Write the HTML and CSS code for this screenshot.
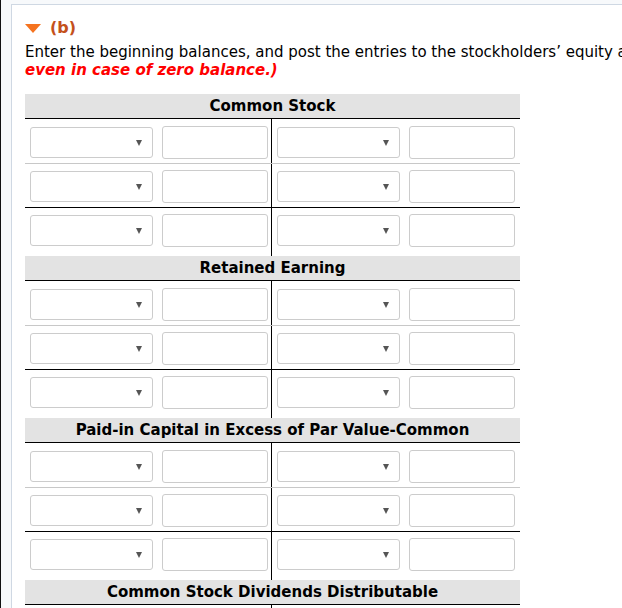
FILE: index.html
```html
<!DOCTYPE html>
<html lang="en">
<head>
    <meta charset="UTF-8">
    <title>Stockholders' Equity T-Accounts</title>
    <link rel="stylesheet" href="styles.css">
</head>
<body>
    <div class="frame">
        <div class="part-title">
            <span class="toggle"></span>
            <span>(b)</span>
        </div>

        <p class="instructions">
            Enter the beginning balances, and post the entries to the stockholders’ equity accounts. <span class="note">(Enter beginning balances<br>even in case of zero balance.)</span>
        </p>

        <div class="accounts" id="accounts"></div>
    </div>

    <template id="row-template">
        <div class="row">
            <div class="side">
                <span class="select-wrap"><select><option></option></select></span>
                <input type="text">
            </div>
            <div class="side">
                <span class="select-wrap"><select><option></option></select></span>
                <input type="text">
            </div>
        </div>
    </template>

    <script>
        const accounts = [
            "Common Stock",
            "Retained Earning",
            "Paid-in Capital in Excess of Par Value-Common",
            "Common Stock Dividends Distributable"
        ];

        const holder = document.getElementById('accounts');
        const rowTemplate = document.getElementById('row-template');

        accounts.forEach(name => {
            const block = document.createElement('div');
            block.className = 't-account';

            const head = document.createElement('div');
            head.className = 't-head';
            head.textContent = name;
            block.appendChild(head);

            const body = document.createElement('div');
            body.className = 't-body';
            for (let i = 0; i < 3; i++) {
                body.appendChild(rowTemplate.content.cloneNode(true));
            }
            block.appendChild(body);

            holder.appendChild(block);
        });
    </script>
</body>
</html>
```

FILE: styles.css
```css
html, body {
    overflow: hidden;
}

body {
    margin: 0;
    background: #f7f9fb;
    border-left: 1px solid #111;
    font-family: 'DejaVu Sans', Verdana, sans-serif;
    color: #000;
}

.frame {
    margin: 4px 0 0 10px;
    width: 1000px;
    min-height: 700px;
    background: #fff;
    border-top: 1px solid #cfd8e3;
    border-left: 1px solid #cfd8e3;
    padding: 10px 0 0 13px;
}

.part-title {
    display: flex;
    align-items: center;
    gap: 9px;
    height: 24px;
    font-size: 16px;
    font-weight: bold;
    color: #c4511c;
}

.toggle {
    width: 0;
    height: 0;
    border-left: 8px solid transparent;
    border-right: 8px solid transparent;
    border-top: 9px solid #f5731f;
    margin-top: 3px;
}

.instructions {
    margin: 4px 0 0;
    font-size: 15px;
    line-height: 18px;
    white-space: nowrap;
}

.note {
    color: #f00;
    font-weight: bold;
    font-style: italic;
}

.accounts {
    width: 495px;
    margin-top: 15px;
}

.t-head {
    background: #e3e3e3;
    height: 24px;
    line-height: 24px;
    border-bottom: 1px solid #000;
    text-align: center;
    font-size: 15px;
    font-weight: bold;
}

.row {
    display: grid;
    grid-template-columns: 247px 248px;
    border-bottom: 1px solid #c8c8c8;
}

.row:nth-child(2) {
    border-bottom-color: #000;
}

.row:last-child {
    border-bottom: none;
}

.side {
    display: flex;
    align-items: center;
    gap: 9px;
    padding: 6px 4px 4px 5px;
}

.side:first-child {
    border-right: 1px solid #000;
}

.row:first-child .side {
    padding-top: 7px;
}

.row:last-child .side {
    padding-bottom: 9px;
}

.select-wrap {
    position: relative;
    display: block;
}

.select-wrap::after {
    content: "";
    position: absolute;
    right: 11px;
    top: 13px;
    border-left: 3px solid transparent;
    border-right: 3px solid transparent;
    border-top: 6px solid #555;
    pointer-events: none;
}

select {
    appearance: none;
    display: block;
    width: 123px;
    height: 31px;
    border: 1px solid #ccc;
    border-radius: 3px;
    background: #fff;
    font-family: inherit;
    font-size: 14px;
}

input {
    display: block;
    width: 106px;
    height: 33px;
    box-sizing: border-box;
    border: 1px solid #ccc;
    border-radius: 3px;
    background: #fff;
    font-family: inherit;
    font-size: 14px;
    padding: 0 6px;
}
```
